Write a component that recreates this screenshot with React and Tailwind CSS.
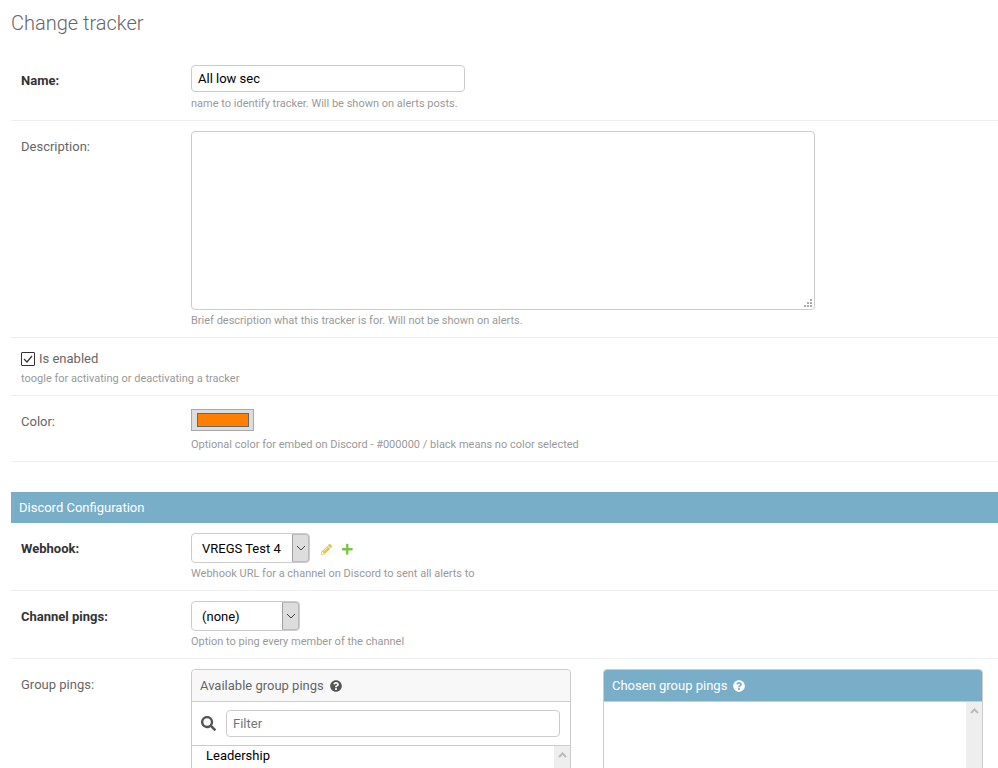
import React from "react";
import { FaPencilAlt, FaPlus, FaQuestionCircle, FaSearch } from "react-icons/fa";

const Row = ({ label, bold, help, children }) => {
  return (
    <div className="flex border-b border-[#eeeeee] px-[10px] pt-[10px] pb-[9px]">
      <div className={`w-[170px] shrink-0 pt-[8px] text-[13px] leading-[16px] ${bold ? "font-bold text-[#333333]" : "text-[#666666]"}`}>
        {label}
      </div>
      <div className="min-w-0 flex-1">
        {children}
        {help && <div className="mt-[4px] text-[11px] leading-[14px] text-[#999999]">{help}</div>}
      </div>
    </div>
  );
};

const FakeSelect = ({ value, width }) => {
  return (
    <div className={`flex h-[30px] items-stretch rounded-[4px] border border-[#cccccc] bg-white ${width}`}>
      <div className="flex-1 pl-[10px] text-[13px] leading-[30px] text-black">{value}</div>
      <div className="flex w-[17px] items-center justify-center rounded-r-[3px] border-y border-r border-l border-y-[#bbbbbb] border-r-[#bbbbbb] border-l-[#a0a0a0] bg-[#dddddd]">
        <svg width="10" height="6" viewBox="0 0 10 6" fill="none" stroke="#444444" strokeWidth="1">
          <path d="M1 1l4 4 4-4" />
        </svg>
      </div>
    </div>
  );
};

const ScrollTrack = () => {
  return (
    <div className="flex w-[16px] shrink-0 justify-center bg-[#eeeeee] pt-[6px]">
      <svg width="9" height="6" viewBox="0 0 9 6" fill="none" stroke="#bbbbbb" strokeWidth="2">
        <path d="M1 5l3.5-3.5L8 5" />
      </svg>
    </div>
  );
};

export default function App() {
  return (
    <div className="h-screen overflow-hidden bg-white pl-[11px] font-['Roboto',sans-serif] text-[13px] text-[#333333]">
      <h1 className="pt-[12px] pb-[20px] text-[20px] leading-[23px] font-light text-[#666666]">Change tracker</h1>

      <Row label="Name:" bold help="name to identify tracker. Will be shown on alerts posts.">
        <input
          readOnly
          value="All low sec"
          className="mb-[5px] block h-[27px] w-[274px] rounded-[4px] border border-[#cccccc] px-[6px] text-[13px] text-black"
        />
      </Row>

      <Row label="Description:" help="Brief description what this tracker is for. Will not be shown on alerts.">
        <div className="relative w-[624px]">
          <textarea readOnly className="block h-[179px] w-full resize-none rounded-[4px] border border-[#cccccc]" />
          {/* resize grip */}
          <svg className="absolute right-[3px] bottom-[3px]" width="8" height="8" viewBox="0 0 8 8" fill="#aaaaaa">
            <rect x="6" y="0" width="2" height="2" />
            <rect x="3" y="3" width="2" height="2" />
            <rect x="6" y="3" width="2" height="2" />
            <rect x="0" y="6" width="2" height="2" />
            <rect x="3" y="6" width="2" height="2" />
            <rect x="6" y="6" width="2" height="2" />
          </svg>
        </div>
      </Row>

      <div className="border-b border-[#eeeeee] px-[10px] pt-[13px] pb-[9px]">
        <div className="flex items-center gap-[4px] text-[13px] leading-[16px] text-[#666666]">
          <span className="-mt-px flex h-[14px] w-[14px] items-center justify-center rounded-[1px] border border-[#333333] bg-white">
            <svg width="12" height="12" viewBox="0 0 12 12" fill="none" stroke="#333333" strokeWidth="1.2">
              <path d="M2 6l3 3 5-6" />
            </svg>
          </span>
          Is enabled
        </div>
        <div className="mt-[5px] text-[11px] leading-[14px] text-[#999999]">toogle for activating or deactivating a tracker</div>
      </div>

      <Row label="Color:" help="Optional color for embed on Discord - #000000 / black means no color selected">
        <div className="mt-[3px] mb-[7px] h-[22px] w-[63px] border border-[#a9a9a9] bg-[#dddddd] py-[3px] pr-[4px] pl-[5px]">
          <div className="h-full border border-[#666666] bg-[#ff8000]" />
        </div>
      </Row>

      <div className="mt-[30px] bg-[#79aec8] px-[8px] py-[8px] text-[13px] leading-[15px] text-white">Discord Configuration</div>

      <Row label="Webhook:" bold help="Webhook URL for a channel on Discord to sent all alerts to">
        <div className="flex items-center">
          <FakeSelect value="VREGS Test 4" width="w-[119px]" />
          <FaPencilAlt className="mt-[3px] ml-[11px] text-[11px] text-[#f0c040]" />
          <FaPlus className="mt-[3px] ml-[9px] text-[12.5px] text-[#7cc34a]" />
        </div>
      </Row>

      <Row label="Channel pings:" bold help="Option to ping every member of the channel">
        <FakeSelect value="(none)" width="w-[109px]" />
      </Row>

      <div className="flex px-[10px] pt-[10px]">
        <div className="w-[170px] shrink-0 pt-[8px] text-[13px] leading-[16px] text-[#666666]">Group pings:</div>
        <div className="flex gap-[32px]">
          <div className="h-[300px] w-[380px] rounded-t-[4px] border border-[#cccccc]">
            <div className="flex h-[32px] items-center gap-[6px] rounded-t-[4px] border-b border-[#cccccc] bg-[#f8f8f8] pl-[8px] text-[13px] text-[#666666]">
              Available group pings
              <FaQuestionCircle className="text-[12px] text-[#555555]" />
            </div>
            <div className="flex h-[44px] items-center border-b border-[#cccccc] pr-[10px] pl-[9px]">
              <FaSearch className="mr-[10px] shrink-0 text-[15px] text-[#555555]" />
              <input
                readOnly
                placeholder="Filter"
                className="h-[27px] min-w-0 flex-1 rounded-[4px] border border-[#cccccc] px-[6px] text-[13px] placeholder:text-[#757575]"
              />
            </div>
            <div className="flex h-full">
              <div className="flex-1 pt-[2px] pl-[14px] text-[13px] leading-[16px] text-black">Leadership</div>
              <ScrollTrack />
            </div>
          </div>
          <div className="h-[300px] w-[380px] rounded-t-[4px] border border-[#cccccc]">
            <div className="flex h-[32px] items-center gap-[6px] rounded-t-[3px] border-b border-[#cccccc] bg-[#79aec8] pl-[8px] text-[13px] text-white">
              Chosen group pings
              <FaQuestionCircle className="text-[12px] text-white" />
            </div>
            <div className="flex h-full">
              <div className="flex-1" />
              <ScrollTrack />
            </div>
          </div>
        </div>
      </div>
    </div>
  );
}
